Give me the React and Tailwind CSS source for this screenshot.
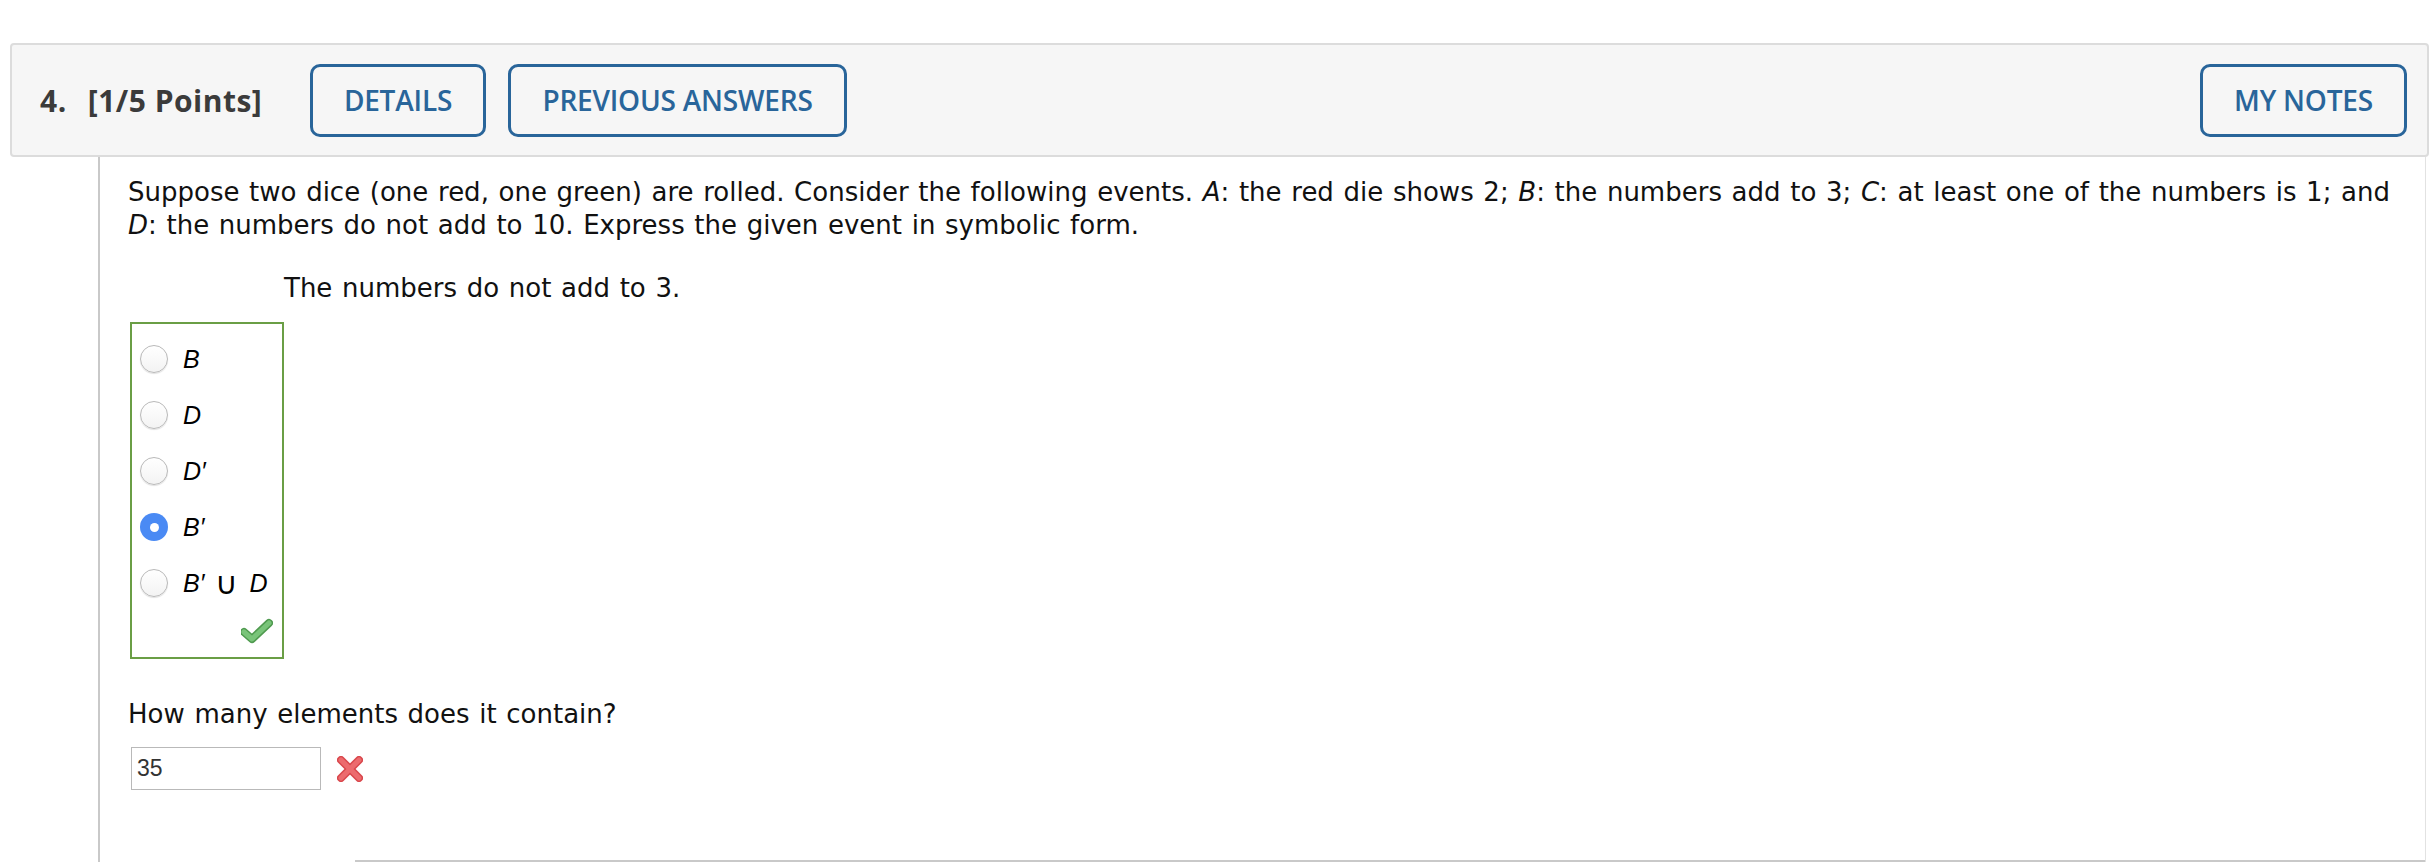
import React from "react";

const Radio = ({ checked }) =>
  checked ? (
    <span className="flex items-center justify-center w-[28px] h-[28px] rounded-full bg-[#4a8af4] shrink-0">
      <span className="w-[9px] h-[9px] rounded-full bg-white" />
    </span>
  ) : (
    <span className="w-[28px] h-[28px] rounded-full border border-[#b9b9b9] bg-gradient-to-b from-white to-[#f3f3f3] shadow-[0_1px_1px_rgba(0,0,0,0.12)] shrink-0" />
  );

const CheckMark = () => (
  <svg width="32" height="26" viewBox="0 0 32 26">
    <path
      d="M3 14 L11 21 L28 5"
      fill="none"
      stroke="#4f9a4f"
      strokeWidth="8"
      strokeLinecap="round"
      strokeLinejoin="round"
    />
    <path
      d="M3 14 L11 21 L28 5"
      fill="none"
      stroke="#79c479"
      strokeWidth="5"
      strokeLinecap="round"
      strokeLinejoin="round"
    />
  </svg>
);

const CrossMark = () => (
  <svg width="26" height="26" viewBox="0 0 26 26">
    <path
      d="M4 4 L22 22 M22 4 L4 22"
      fill="none"
      stroke="#d9474c"
      strokeWidth="8"
      strokeLinecap="round"
    />
    <path
      d="M4 4 L22 22 M22 4 L4 22"
      fill="none"
      stroke="#ec6b6e"
      strokeWidth="5"
      strokeLinecap="round"
    />
  </svg>
);

const options = [
  { label: "B" },
  { label: "D" },
  { label: "D′" },
  { label: "B′", checked: true },
  { label: "B′ ∪ D" },
];

const OptionLabel = ({ text }) => {
  if (text === "B′ ∪ D") {
    return (
      <span className="flex items-center">
        <i>B′</i>
        <span className="mx-[11px] not-italic font-['DejaVu_Sans',sans-serif] font-light text-[31px] leading-none">∪</span>
        <i>D</i>
      </span>
    );
  }
  return <i>{text}</i>;
};

const App = () => {
  const btn =
    "h-[73px] border-[3px] border-[#29659a] rounded-[10px] flex items-center justify-center text-[#29659a] font-semibold text-[28px] tracking-[-0.2px]";

  return (
    <main className="w-[2434px] h-[862px] bg-white overflow-hidden pt-[43px] pl-[10px] pr-[5px] font-['DejaVu_Sans',sans-serif]">
      <header className="flex items-center h-[114px] border-2 border-[#dcdcdc] rounded-[4px] bg-[#f6f6f6] pl-[28px] pr-[20px] font-['Open_Sans',sans-serif]">
        <p className="w-[270px] text-[30px] tracking-[0.5px] font-bold text-[#3b3b3b]">
          4.<span className="ml-[21px]">[1/5 Points]</span>
        </p>
        <button className={`${btn} w-[176px]`}>DETAILS</button>
        <button className={`${btn} w-[339px] ml-[22px]`}>PREVIOUS ANSWERS</button>
        <button className={`${btn} w-[207px] ml-auto`}>MY NOTES</button>
      </header>

      <section className="flex flex-col h-[705px] ml-[88px] mr-[3px] border-l-2 border-[#c9c9c9] border-r border-r-[#e2e2e2]">
        <div className="pl-[28px] pr-[30px] pt-[19px] text-[26px] leading-[33px] [word-spacing:1.4px] text-[#111]">
          <p>
            Suppose two dice (one red, one green) are rolled. Consider the
            following events. <i>A</i>: the red die shows 2; <i>B</i>: the
            numbers add to 3; <i>C</i>: at least one of the numbers is 1; and{" "}
            <i>D</i>: the numbers do not add to 10. Express the given event in
            symbolic form.
          </p>

          <p className="mt-[30px] ml-[156px]">The numbers do not add to 3.</p>

          <div className="mt-[17px] ml-[2px] w-[154px] border-2 border-[#6a9e45] pt-[7px] pb-[13px] flex flex-col [word-spacing:0px]">
            {options.map((o) => (
              <div key={o.label} className="flex items-center h-[56px] pl-[8px] gap-[15px]">
                <Radio checked={o.checked} />
                <span className="font-['Liberation_Sans',sans-serif] text-[25px] text-black">
                  <OptionLabel text={o.label} />
                </span>
              </div>
            ))}
            <div className="flex justify-end pr-[9px] mt-[7px]">
              <CheckMark />
            </div>
          </div>

          <p className="mt-[39px]">How many elements does it contain?</p>

          <div className="flex items-center mt-[16px] ml-[3px] gap-[16px]">
            <input
              readOnly
              value="35"
              className="w-[190px] h-[43px] border border-[#b9b9b9] px-[5px] font-['Liberation_Sans',sans-serif] text-[23px] text-[#333] bg-white outline-none"
            />
            <CrossMark />
          </div>
        </div>
        <div className="mt-auto ml-[255px] h-[2px] bg-[#c9c9c9]" />
      </section>
    </main>
  );
};

export default App;
